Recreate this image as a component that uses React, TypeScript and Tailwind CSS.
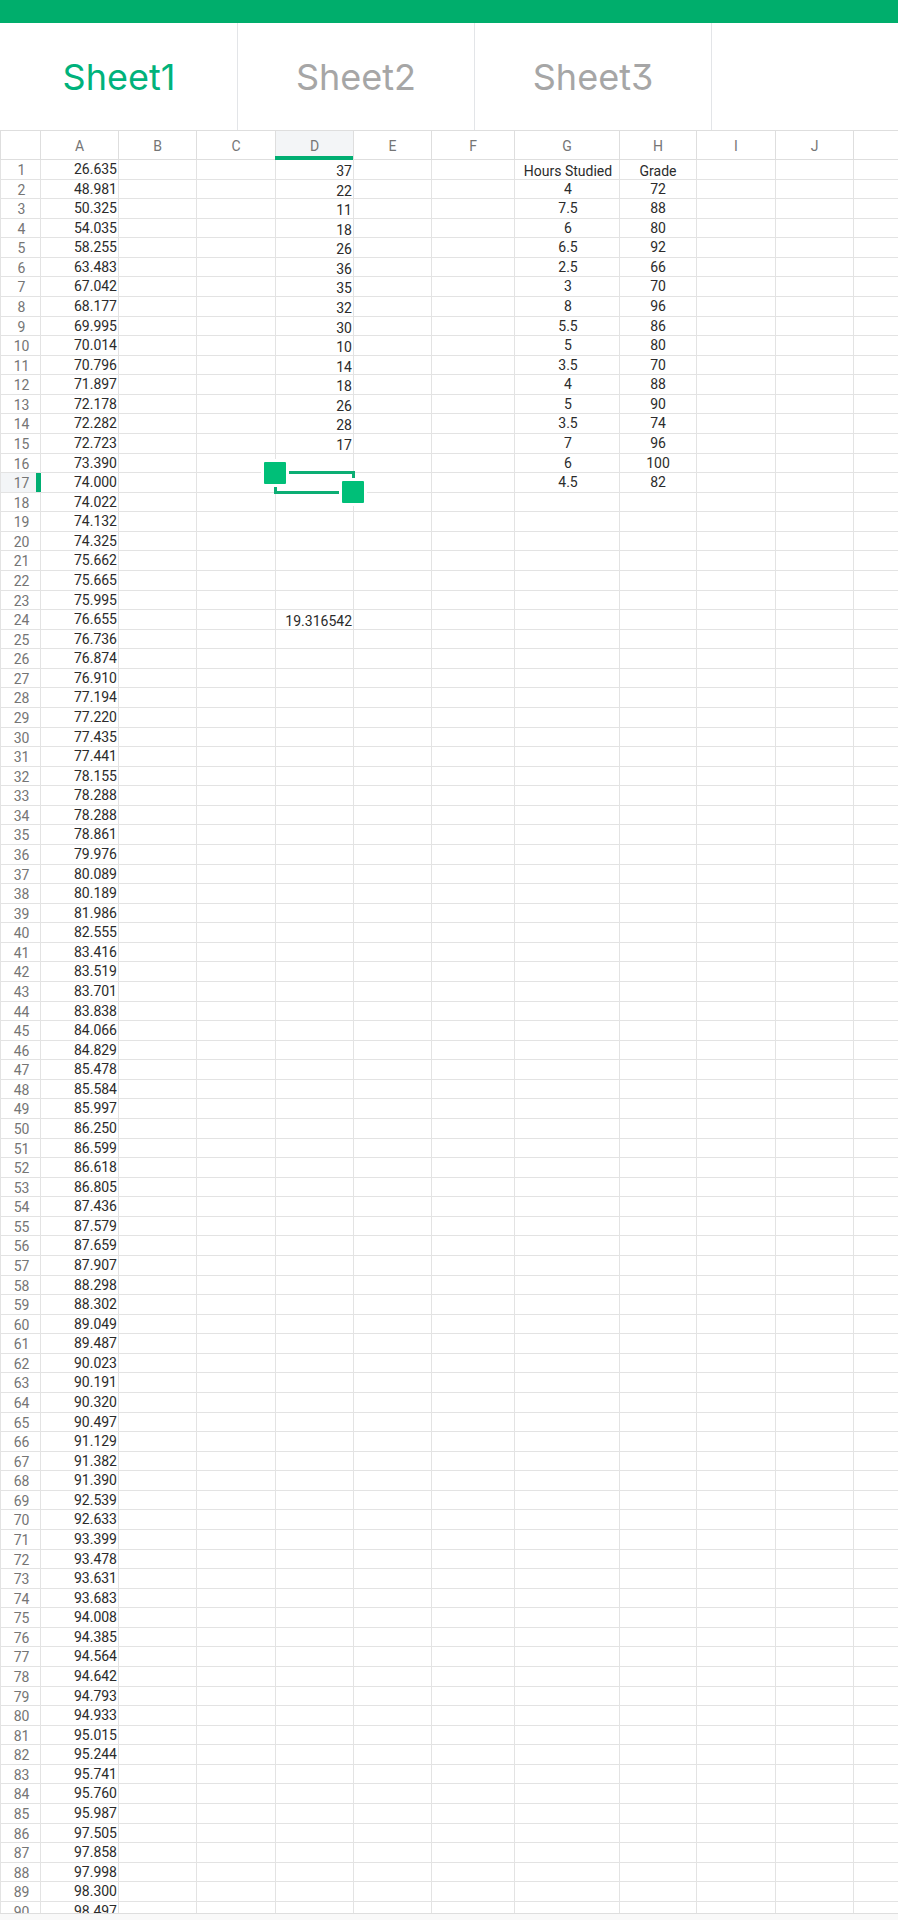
import { useState } from "react";
import clsx from "clsx";

interface Column {
  name: string;
  width: string;
}

const columns: Column[] = [
  { name: "A", width: "w-[78px]" },
  { name: "B", width: "w-[78px]" },
  { name: "C", width: "w-[79px]" },
  { name: "D", width: "w-[78px]" },
  { name: "E", width: "w-[78px]" },
  { name: "F", width: "w-[83px]" },
  { name: "G", width: "w-[105px]" },
  { name: "H", width: "w-[77px]" },
  { name: "I", width: "w-[79px]" },
  { name: "J", width: "w-[78px]" },
];

const scores = `26.635 48.981 50.325 54.035 58.255 63.483 67.042 68.177 69.995 70.014
70.796 71.897 72.178 72.282 72.723 73.390 74.000 74.022 74.132 74.325
75.662 75.665 75.995 76.655 76.736 76.874 76.910 77.194 77.220 77.435
77.441 78.155 78.288 78.288 78.861 79.976 80.089 80.189 81.986 82.555
83.416 83.519 83.701 83.838 84.066 84.829 85.478 85.584 85.997 86.250
86.599 86.618 86.805 87.436 87.579 87.659 87.907 88.298 88.302 89.049
89.487 90.023 90.191 90.320 90.497 91.129 91.382 91.390 92.539 92.633
93.399 93.478 93.631 93.683 94.008 94.385 94.564 94.642 94.793 94.933
95.015 95.244 95.741 95.760 95.987 97.505 97.858 97.998 98.300 98.497`.split(
  /\s+/,
);

const values = [37, 22, 11, 18, 26, 36, 35, 32, 30, 10, 14, 18, 26, 28, 17];
const hours = [4, 7.5, 6, 6.5, 2.5, 3, 8, 5.5, 5, 3.5, 4, 5, 3.5, 7, 6, 4.5];
const grades = [
  72, 88, 80, 92, 66, 70, 96, 86, 80, 70, 88, 90, 74, 96, 100, 82,
];

const sheets = ["Sheet1", "Sheet2", "Sheet3"];
const active = { column: "D", row: 17 };

const getCell = (column: string, row: number) => {
  switch (column) {
    case "A":
      return scores[row - 1];
    case "D":
      return row === 24 ? "19.316542" : values[row - 1];
    case "G":
      return row === 1 ? "Hours Studied" : hours[row - 2];
    case "H":
      return row === 1 ? "Grade" : grades[row - 2];
    default:
      return "";
  }
};

const Selection = () => (
  <div className="absolute -inset-0.5 z-10 border-3 border-[#0cae74]">
    <span className="absolute -top-3 -left-[13px] size-[22px] rounded-[1px] bg-[#00bf78] ring-3 ring-white" />
    <span className="absolute -right-3 -bottom-3 size-[22px] rounded-[1px] bg-[#00bf78] ring-3 ring-white" />
  </div>
);

const Cell = ({ column, row }: { column: string; row: number }) => {
  const selected = column === active.column && row === active.row;
  return (
    <td
      className={clsx(
        "relative p-0 align-top whitespace-nowrap border-r border-b border-[#e3e3e3]",
        column === "D" || (row === 1 && column !== "A") ? "pt-1" : "pt-0.5",
        column === "G" && "pl-0.5",
        column === "G" || column === "H" ? "text-center" : "pr-px text-right",
      )}
    >
      {getCell(column, row)}
      {selected && <Selection />}
    </td>
  );
};

const App = () => {
  const [sheet, setSheet] = useState("Sheet1");

  return (
    <div className="flex h-screen flex-col overflow-hidden bg-white font-[Roboto,sans-serif]">
      <header className="h-[23px] shrink-0 bg-[#00ae6c]" />
      <nav className="flex h-[107px] shrink-0 pl-px">
        {sheets.map((name) => (
          <button
            key={name}
            onClick={() => setSheet(name)}
            className={clsx(
              "w-[237px] border-r border-[#e3e5e8] font-[Inter,sans-serif] text-4xl [font-feature-settings:'cv09']",
              name === sheet ? "text-[#00b27b]" : "text-[#a6a6a6]",
            )}
          >
            {name}
          </button>
        ))}
      </nav>
      <main className="min-h-0 flex-1 overflow-hidden">
        <table className="w-full table-fixed border-separate border-spacing-0 text-sm leading-[14px] text-[#2b2b2b]">
          <colgroup>
            <col className="w-[41px]" />
            {columns.map((c) => (
              <col key={c.name} className={c.width} />
            ))}
            <col />
          </colgroup>
          <thead>
            <tr className="h-[30px] text-[#757575]">
              <th className="border border-[#dedede] p-0" />
              {columns.map((c) => (
                <th
                  key={c.name}
                  className={clsx(
                    "relative border-t border-r border-b border-[#dedede] p-0 pt-0.5 font-normal",
                    c.name === active.column && "bg-[#f3f5f7]",
                  )}
                >
                  {c.name}
                  {c.name === active.column && (
                    <span className="absolute right-0 -bottom-px -left-px h-1 bg-[#00ae72]" />
                  )}
                </th>
              ))}
              <th className="border-t border-b border-[#dedede] p-0" />
            </tr>
          </thead>
          <tbody>
            {scores.map((_, i) => (
              <tr key={i} className={(i % 7) % 2 === 0 ? "h-5" : "h-[19px]"}>
                <th
                  className={clsx(
                    "relative border-r border-b border-l border-[#e3e3e3] p-0 pt-[3px] pl-0.5 align-top font-normal text-[#757575]",
                    i + 1 === active.row && "bg-[#f3f5f7]",
                  )}
                >
                  {i + 1}
                  {i + 1 === active.row && (
                    <span className="absolute top-0 -right-px bottom-0 w-[5px] bg-[#00ae72]" />
                  )}
                </th>
                {columns.map((c) => (
                  <Cell key={c.name} column={c.name} row={i + 1} />
                ))}
                <td className="border-b border-[#e3e3e3] p-0" />
              </tr>
            ))}
          </tbody>
        </table>
      </main>
      <footer className="h-[7px] shrink-0 border-t border-[#dedede] bg-[#f9f9f9]" />
    </div>
  );
};

export default App;
